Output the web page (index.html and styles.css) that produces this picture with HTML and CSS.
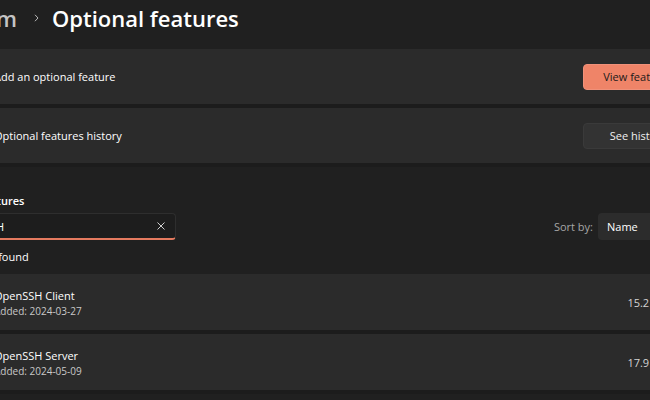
FILE: index.html
```html
<!DOCTYPE html>
<html lang="en">
<head>
<meta charset="utf-8">
<title>Optional features</title>
<link rel="stylesheet" href="styles.css">
</head>
<body>
<div class="page">
  <header class="crumbs">
    <span class="crumb-parent">System</span>
    <svg class="crumb-sep" width="5" height="8" viewBox="0 0 5 8"><path d="M1 0.8 L4 4 L1 7.2" fill="none" stroke="#b8b8b8" stroke-width="1"/></svg>
    <h1 class="crumb-current">Optional features</h1>
  </header>

  <div class="card">
    <span class="card-label">Add an optional feature</span>
    <button class="btn btn-accent">View features</button>
  </div>
  <div class="card">
    <span class="card-label">Optional features history</span>
    <button class="btn btn-default">See history</button>
  </div>

  <section class="features">
    <h2 class="section-title">Features</h2>
    <div class="toolbar">
      <div class="search">
        <span class="search-text">SSH</span>
        <svg class="search-clear" width="8" height="8" viewBox="0 0 8 8"><path d="M0.5 0.5 L7.5 7.5 M7.5 0.5 L0.5 7.5" stroke="#cfcfcf" stroke-width="1" fill="none"/></svg>
      </div>
      <div class="sort">
        <span class="sort-label">Sort by:</span>
        <div class="dropdown">
          <span>Name</span>
          <svg width="10" height="6" viewBox="0 0 10 6"><path d="M1 1 L5 5 L9 1" fill="none" stroke="#cfcfcf" stroke-width="1"/></svg>
        </div>
      </div>
    </div>
    <p class="count">2 found</p>

    <div class="item">
      <div class="item-text">
        <span class="item-name">OpenSSH Client</span>
        <span class="item-date">Added: 2024-03-27</span>
      </div>
      <div class="item-end">
        <span class="item-size">15.2 MB</span>
        <svg width="10" height="6" viewBox="0 0 10 6"><path d="M1 1 L5 5 L9 1" fill="none" stroke="#cfcfcf" stroke-width="1"/></svg>
      </div>
    </div>
    <div class="item">
      <div class="item-text">
        <span class="item-name">OpenSSH Server</span>
        <span class="item-date">Added: 2024-05-09</span>
      </div>
      <div class="item-end">
        <span class="item-size">17.9 MB</span>
        <svg width="10" height="6" viewBox="0 0 10 6"><path d="M1 1 L5 5 L9 1" fill="none" stroke="#cfcfcf" stroke-width="1"/></svg>
      </div>
    </div>
  </section>
</div>
</body>
</html>
```

FILE: styles.css
```css
html, body {
  margin: 0;
  padding: 0;
  background: #202020;
  height: 100%;
  overflow: hidden;
}

body {
  font-family: "Open Sans", "Noto Sans", sans-serif;
  font-size: 11px;
  color: #ffffff;
}

.page {
  width: 731px;
  margin-left: -22px;
}

.crumbs {
  display: flex;
  align-items: center;
  height: 36px;
  margin: 0 0 13px -38px;
  font-size: 22px;
  font-weight: 600;
  line-height: 36px;
}

.crumb-parent {
  color: #c4c4c4;
}

.crumb-sep {
  margin: 0 13px 0 17px;
}

.crumb-current {
  margin: 0;
  font-size: 22px;
  font-weight: 600;
  color: #ffffff;
}

.card {
  display: flex;
  align-items: center;
  justify-content: space-between;
  height: 55px;
  padding: 0 16px;
  background: #2b2b2b;
  border-bottom: 4px solid #1c1c1c;
}

.card-label {
  line-height: 16px;
}

.btn {
  width: 110px;
  height: 26px;
  border-radius: 4px;
  font-family: inherit;
  font-size: 11px;
  padding: 0;
  cursor: default;
}

.btn-accent {
  background: #ef8468;
  border: 1px solid #f0917a;
  color: #1a1a1a;
}

.btn-default {
  background: #333333;
  border: 1px solid #3a3a3a;
  color: #f0f0f0;
}

.features {
  margin-top: 25px;
}

.section-title {
  margin: 0;
  font-size: 11px;
  font-weight: 600;
  line-height: 16px;
  padding-top: 1px;
}

.toolbar {
  display: flex;
  align-items: center;
  justify-content: space-between;
  margin-top: 4px;
}

.search {
  display: flex;
  align-items: center;
  justify-content: space-between;
  box-sizing: border-box;
  width: 204px;
  height: 27px;
  margin-left: -6px;
  padding: 0 10px 0 11px;
  background: #1d1d1d;
  border: 1px solid #2e2e2e;
  border-bottom: 2px solid #e47a5f;
  border-radius: 4px;
}

.search-text {
  color: #ffffff;
}

.sort {
  display: flex;
  align-items: center;
  gap: 5px;
}

.sort-label {
  color: #a6a6a6;
}

.dropdown {
  display: flex;
  align-items: center;
  justify-content: space-between;
  box-sizing: border-box;
  width: 111px;
  height: 27px;
  padding: 0 12px 0 9px;
  background: #2c2c2c;
  border-radius: 4px;
}

.count {
  margin: 9px 0 9px 11px;
  line-height: 16px;
}

.item {
  display: flex;
  align-items: center;
  justify-content: space-between;
  height: 56px;
  padding: 0 16px;
  background: #2b2b2b;
  border-bottom: 4px solid #1c1c1c;
}

.item-text {
  display: flex;
  flex-direction: column;
  padding-top: 2px;
}

.item-name {
  font-size: 11px;
  line-height: 16px;
}

.item-date {
  font-size: 10px;
  line-height: 15px;
  color: #c8c8c8;
}

.item-end {
  display: flex;
  align-items: center;
  gap: 12px;
}

.item-size {
  color: #d4d4d4;
  word-spacing: 2px;
}
```
